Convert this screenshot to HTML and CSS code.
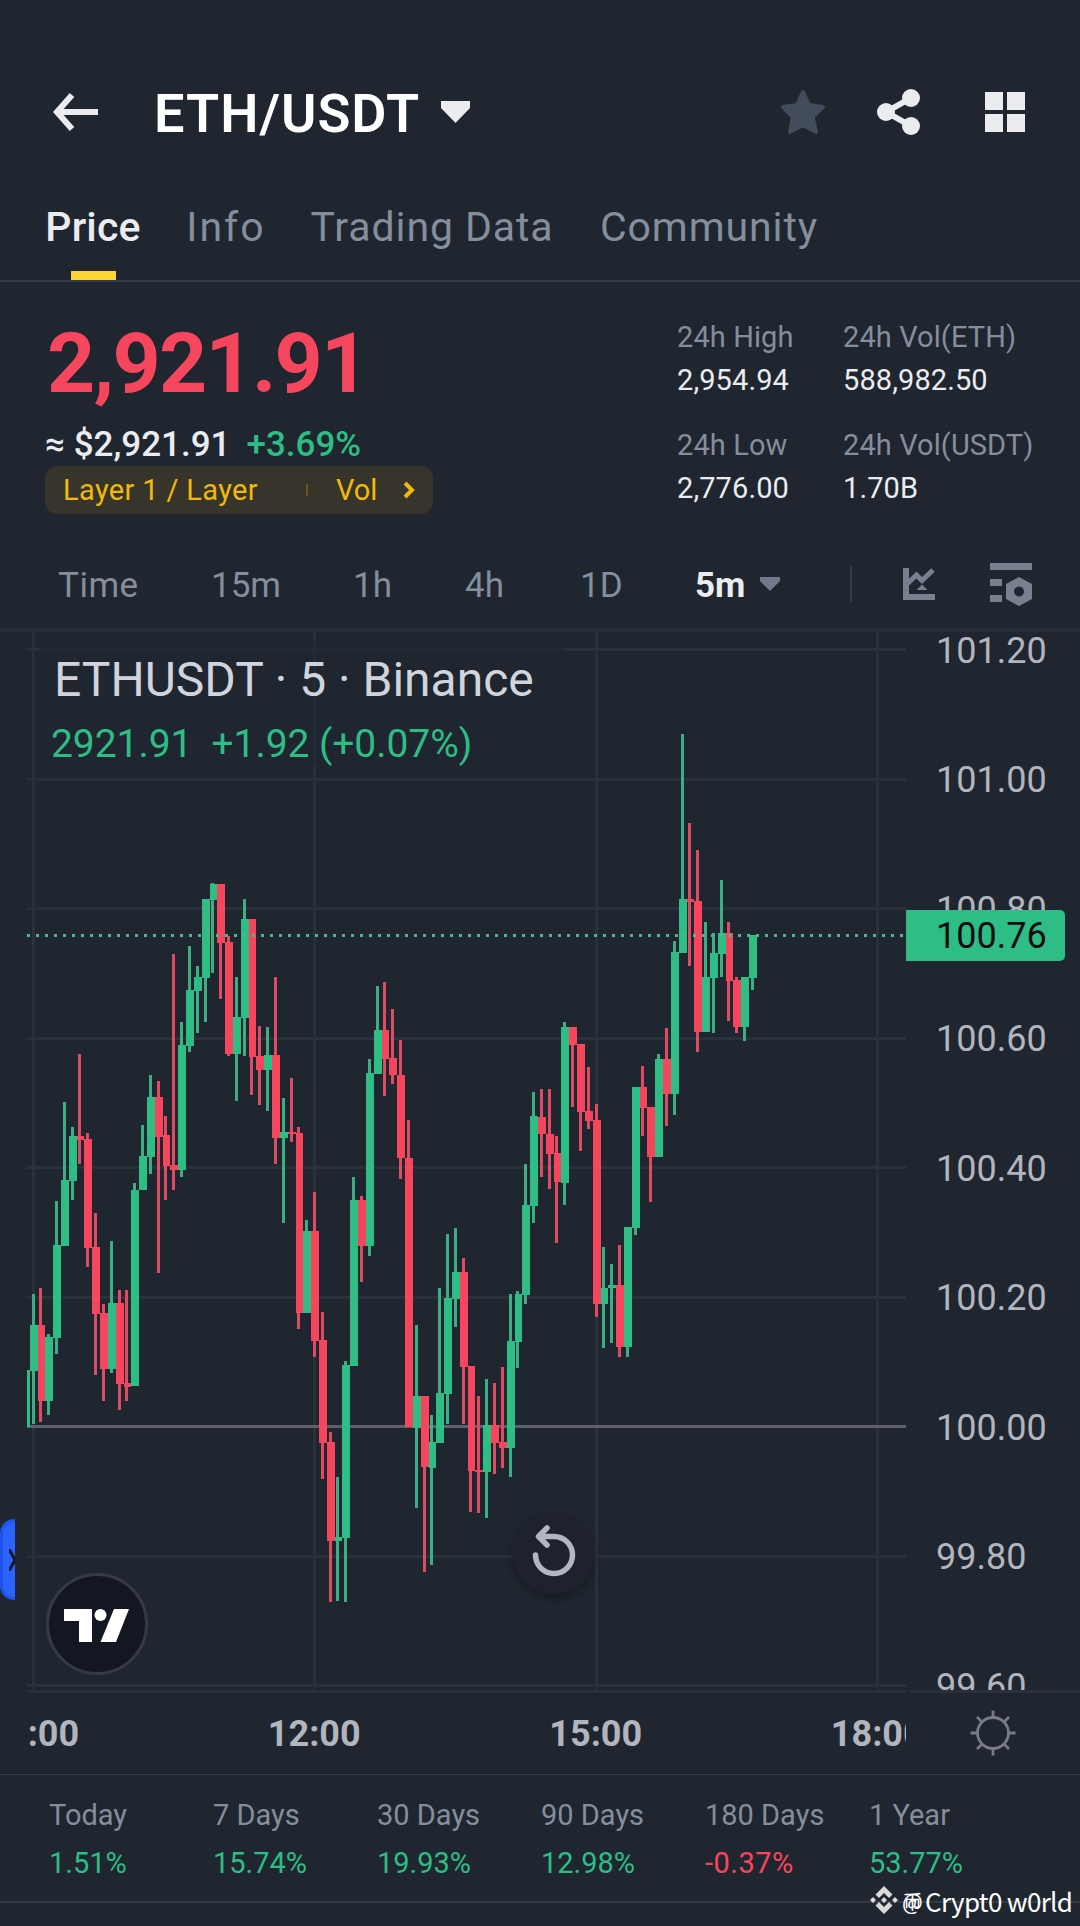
FILE: index.html
```html
<!DOCTYPE html>
<html lang="en">
  <head>
    <meta charset="UTF-8" />
    <meta name="viewport" content="width=device-width, initial-scale=1.0" />
    <title>ETH/USDT</title>
    <link rel="stylesheet" href="styles.css">
  </head>

  <body>
    <header class="topbar">
      <svg class="back" width="46" height="38" viewBox="0 0 46 38">
        <path d="M19 2 L4 19 L19 36 M4 19 H45" fill="none" stroke="#eaecef" stroke-width="6" />
      </svg>
      <h1>ETH/USDT</h1>
      <svg class="caret" width="29" height="22" viewBox="0 0 29 22">
        <path d="M0 0 H29 V7 L14.5 22 L0 7 Z" fill="#eaecef" />
      </svg>
      <div class="actions">
        <svg width="46" height="46" viewBox="0 0 46 46">
          <path d="M23 3 L29 16 L43 18 L32.500 28 L36 43 L23 36 L10 43 L13 28 L3 18 L17 16 Z" fill="#434c5a" stroke="#434c5a" stroke-width="4" stroke-linejoin="round" />
        </svg>
        <svg width="44" height="46" viewBox="0 0 44 46">
          <path d="M34 9 L9 23 L34 37" fill="none" stroke="#eaecef" stroke-width="6" />
          <g fill="#eaecef">
            <circle cx="34" cy="9" r="9" />
            <circle cx="9" cy="23" r="9" />
            <circle cx="34" cy="37" r="9" />
          </g>
        </svg>
        <svg width="40" height="40" viewBox="0 0 40 40">
          <path d="M0 0h18v18H0zM22 0h18v18H22zM0 22h18v18H0zM22 22h18v18H22z" fill="#eaecef" />
        </svg>
      </div>
    </header>

    <nav class="tabs">
      <a class="tab active">Price</a>
      <a class="tab info">Info</a>
      <a class="tab trading">Trading Data</a>
      <a class="tab community">Community</a>
    </nav>

    <section class="summary">
      <div class="quote">
        <div class="last-price">2,921.91</div>
        <div class="fiat"><span>≈ $2,921.91</span><span class="up">+3.69%</span></div>
        <div class="tag">
          <span class="tag-layer">Layer 1 / Layer</span>
          <i class="tag-sep"></i>
          <span>Vol</span>
          <svg width="12" height="18" viewBox="0 0 12 18">
            <path d="M2 2 L9 9 L2 16" fill="none" stroke="#f0b90b" stroke-width="4" />
          </svg>
        </div>
      </div>
      <div class="stats">
        <div class="stat"><span>24h High</span><b>2,954.94</b></div>
        <div class="stat"><span>24h Vol(ETH)</span><b>588,982.50</b></div>
        <div class="stat"><span>24h Low</span><b>2,776.00</b></div>
        <div class="stat"><span>24h Vol(USDT)</span><b>1.70B</b></div>
      </div>
    </section>

    <nav class="intervals">
      <span class="i-time">Time</span>
      <span class="i-15m">15m</span>
      <span class="i-1h">1h</span>
      <span class="i-4h">4h</span>
      <span class="i-1d">1D</span>
      <span class="i-5m">5m</span>
      <svg width="20" height="14" viewBox="0 0 20 14">
        <path d="M0 0 H20 V4 L10 14 L0 4 Z" fill="#707a8a" />
      </svg>
      <i class="divider"></i>
      <svg class="indicator" width="32" height="32" viewBox="0 0 32 32">
        <path d="M0 0H6V26H32V32H0Z" fill="#76808f" />
        <path d="M3 17 L13.500 7 L19 12.500 L30 2" fill="none" stroke="#76808f" stroke-width="5" />
        <path d="M19 16.500 L24.500 22 H13.500 Z" fill="#76808f" />
      </svg>
      <svg class="settings" width="42" height="43" viewBox="0 0 42 43">
        <path d="M0 0H42V7H0ZM0 16H12V23H0ZM0 32H12V39H0Z" fill="#76808f" />
        <path fill-rule="evenodd" d="M29 14 L42 21 V36 L29 43 L16 36 V21 Z M29 23.500 a5 5 0 1 0 .01 0 Z" fill="#76808f" />
      </svg>
    </nav>

    <section class="chart">
      <svg class="plot" id="plot" width="906" height="1058" viewBox="0 2 906 1058" shape-rendering="crispEdges"></svg>

      <div class="price-axis">
        <span>101.20</span>
        <span>101.00</span>
        <span>100.80</span>
        <span>100.60</span>
        <span>100.40</span>
        <span>100.20</span>
        <span>100.00</span>
        <span>99.80</span>
        <span>99.60</span>
      </div>
      <div class="price-tag">100.76</div>

      <div class="legend">
        <div class="symbol">ETHUSDT · 5 · Binance</div>
        <div class="change"><span>2921.91</span><span class="delta">+1.92 (+0.07%)</span></div>
      </div>

      <div class="drawer">
        <svg width="6" height="22" viewBox="0 0 6 22">
          <path d="M0 0 L6 11 L0 22" fill="none" stroke="#131722" stroke-width="3" />
        </svg>
      </div>

      <div class="tv-logo">
        <svg width="66" height="34" viewBox="0 0 66 34">
          <path d="M0 0H28V33H15V12H0ZM50 0H65L52 33H36.500Z" fill="#fff" />
          <circle cx="36.500" cy="6" r="6" fill="#fff" />
        </svg>
      </div>

      <div class="reset">
        <svg width="44" height="52" viewBox="0 0 44 52">
          <path d="M3.500 30 A18.500 18.500 0 1 0 22 11.500 H7 M15 3 L6.500 11.500 L15 20" fill="none" stroke="#b2b5c3" stroke-width="5.500" stroke-linecap="round" stroke-linejoin="round" />
        </svg>
      </div>
    </section>

    <section class="time-axis">
      <div class="times">
        <div class="times-track">
          <span>09:00</span>
          <span>12:00</span>
          <span>15:00</span>
          <span>18:00</span>
        </div>
      </div>
      <div class="gear">
        <svg width="46" height="46" viewBox="-23 -23 46 46">
          <g fill="none" stroke="#787b86" stroke-width="2.800">
            <circle r="15.500" />
            <path d="M0 -15V-22.500M0 15V22.500M-15 0H-22.500M15 0H22.500M-11 -11L-16 -16M11 -11L16 -16M-11 11L-16 16M11 11L16 16" />
          </g>
        </svg>
      </div>
    </section>

    <section class="performance">
      <div class="period"><span>Today</span><b>1.51%</b></div>
      <div class="period"><span>7 Days</span><b>15.74%</b></div>
      <div class="period"><span>30 Days</span><b>19.93%</b></div>
      <div class="period"><span>90 Days</span><b>12.98%</b></div>
      <div class="period"><span>180 Days</span><b class="down">-0.37%</b></div>
      <div class="period"><span>1 Year</span><b>53.77%</b></div>
    </section>

    <footer class="credit">
      <svg width="28" height="28" viewBox="0 0 28 28">
        <path d="M14 0 L22.500 8.500 L19 12 L14 7 L9 12 L5.500 8.500 ZM14 28 L22.500 19.500 L19 16 L14 21 L9 16 L5.500 19.500 ZM3 11 L6 14 L3 17 L0 14 ZM25 11 L28 14 L25 17 L22 14 ZM14 11 L17 14 L14 17 L11 14 Z" fill="#d9d9d9" />
      </svg>
      <span class="at">@<i>币</i></span>
      <span class="name">Crypt0 w0rld</span>
    </footer>

    <script src="script.js"></script>
  </body>
</html>
```

FILE: styles.css
```css
body {
  font-family: Roboto, "Liberation Sans", sans-serif;
  background-color: #1f262f;
  color: #eaecef;
  margin: 0;
  width: 1080px;
  height: 1926px;
  overflow: hidden;
  position: relative;
  white-space: nowrap;
}

svg {
  display: block;
  flex: none;
}

b {
  font-weight: 400;
}

.up {
  color: #2ebd85;
}

/* Header */
.topbar {
  display: flex;
  align-items: center;
  height: 153px;
  padding: 71px 55px 0 53px;
  box-sizing: border-box;
}

.topbar h1 {
  width: 287px;
  margin: 4px 0 0 55px;
  font-size: 54px;
  line-height: 60px;
  font-weight: 600;
  letter-spacing: 1px;
  color: #fff;
}

.actions {
  display: flex;
  align-items: center;
  gap: 51px;
  margin-left: auto;
}

.actions svg:last-child {
  margin-left: 13px;
}

/* Tabs */
.tabs {
  display: flex;
  height: 127px;
  padding-left: 46px;
  border-bottom: 2px solid #333b47;
}

.tab {
  display: flex;
  flex-direction: column;
  justify-content: space-between;
  align-items: center;
  padding-top: 49px;
  font-size: 41px;
  line-height: 50px;
  letter-spacing: 0.9px;
  color: #848e9c;
}

.tab.active {
  width: 94px;
  font-weight: 500;
  letter-spacing: 0.2px;
  color: #eaecef;
}

.tab.active::after {
  content: "";
  width: 45px;
  height: 9px;
  background-color: #fcd535;
}

.info {
  width: 78px;
  margin-left: 47px;
  letter-spacing: 2px;
}

.trading {
  width: 244px;
  margin-left: 45px;
}

.community {
  width: 220px;
  margin-left: 45px;
}

/* Price summary */
.summary {
  display: flex;
  height: 258px;
}

.quote {
  width: 677px;
  padding: 32px 0 0 45px;
  box-sizing: border-box;
}

.last-price {
  margin-left: 2px;
  font-size: 84px;
  line-height: 100px;
  font-weight: 700;
  letter-spacing: -1.7px;
  color: #f6465d;
}

.fiat {
  display: flex;
  gap: 16px;
  margin-top: 9px;
  font-size: 35px;
  line-height: 43px;
  font-weight: 500;
}

.tag {
  display: flex;
  align-items: center;
  width: 388px;
  height: 48px;
  padding-left: 18px;
  box-sizing: border-box;
  border-radius: 12px;
  background-color: #37342c;
  color: #f0b90b;
  font-size: 29px;
}

.tag-layer {
  width: 243px;
  letter-spacing: 0.35px;
}

.tag-sep {
  width: 2px;
  height: 12px;
  margin-right: 28px;
  background-color: #6c5720;
}

.tag svg {
  margin-left: 26px;
}

.stats {
  display: grid;
  grid-template-columns: 166px 230px;
  grid-template-rows: 108px 108px;
  padding-top: 34px;
}

.stat {
  display: flex;
  flex-direction: column;
  font-size: 29px;
  line-height: 43px;
  letter-spacing: 0.1px;
}

.stat span {
  color: #848e9c;
}

/* Intervals */
.intervals {
  display: flex;
  align-items: center;
  height: 88px;
  padding-left: 58px;
  border-bottom: 4px solid #262d37;
  font-size: 35px;
  color: #848e9c;
}

.intervals span {
  padding-top: 3px;
}

.i-time {
  width: 153px;
  letter-spacing: 0.5px;
}

.i-15m {
  width: 142px;
}

.i-1h {
  width: 112px;
}

.i-4h {
  width: 115px;
}

.i-1d {
  width: 115px;
}

.i-5m {
  width: 65px;
  font-weight: 700;
  color: #eaecef;
}

.divider {
  width: 2px;
  height: 36px;
  margin: 0 51px 0 70px;
  background-color: #333b47;
}

.settings {
  margin-left: 55px;
}

/* Chart */
.chart {
  display: flex;
  position: relative;
  height: 1058px;
}

.price-axis {
  display: flex;
  flex-direction: column;
  width: 174px;
  height: 1058px;
  overflow: hidden;
  font-size: 36px;
  color: #b2b5be;
}

.price-axis span {
  flex: none;
  height: 129.5px;
  padding-left: 30px;
  line-height: 129.5px;
}

.price-axis span:first-child {
  margin-top: -45.5px;
}

.price-tag {
  position: absolute;
  left: 906px;
  top: 278px;
  width: 159px;
  height: 51px;
  padding-left: 30px;
  box-sizing: border-box;
  border-radius: 0 5px 5px 0;
  background-color: #2ebd85;
  color: #0b0e11;
  font-size: 36px;
  line-height: 53px;
}

.legend {
  position: absolute;
  left: 39px;
  top: 8px;
  width: 526px;
  height: 126px;
  padding: 10px 0 0 13px;
  box-sizing: border-box;
  background-color: rgba(31, 38, 47, 0.5);
}

.symbol {
  margin-left: 2px;
  font-size: 48px;
  line-height: 60px;
  color: #d1d4dc;
}

.change {
  display: flex;
  gap: 19px;
  margin: 9px 0 0 -1px;
  font-size: 39px;
  line-height: 50px;
  letter-spacing: -0.05px;
  color: #2ebd85;
}

.drawer {
  position: absolute;
  left: 0;
  top: 887px;
  width: 15px;
  height: 81px;
  border: solid #1e53e5;
  border-width: 3px 0 3px 3px;
  border-radius: 14px 0 0 14px;
  background-color: #2962ff;
  box-sizing: border-box;
  display: flex;
  align-items: center;
  justify-content: flex-end;
}

.tv-logo {
  position: absolute;
  left: 46px;
  top: 941px;
  width: 102px;
  height: 102px;
  padding-top: 3px;
  border: 3px solid #363a45;
  border-radius: 50%;
  background-color: #131722;
  box-sizing: border-box;
  display: flex;
  align-items: center;
  justify-content: center;
}

.reset {
  position: absolute;
  left: 513px;
  top: 880px;
  width: 82px;
  height: 82px;
  padding-bottom: 4px;
  border-radius: 50%;
  background-color: #1e222d;
  box-shadow: 0 4px 8px rgba(0, 0, 0, 0.3);
  box-sizing: border-box;
  display: flex;
  align-items: center;
  justify-content: center;
}

/* Time axis */
.time-axis {
  display: flex;
  height: 84px;
  border-bottom: 1px solid #333b47;
}

.times {
  width: 879px;
  margin-left: 27px;
  overflow: hidden;
  border-top: 3px solid #2a2f39;
}

.times-track {
  display: flex;
  margin-left: -135px;
}

.times-track span {
  flex: none;
  width: 281.5px;
  line-height: 83px;
  font-size: 36px;
  font-weight: 700;
  text-align: center;
  color: #b2b5be;
}

.gear {
  flex: 1;
  display: flex;
  align-items: center;
  margin-left: 3px;
  padding: 0 0 2px 61px;
  border-top: 3px solid #2a2f39;
}

/* Performance */
.performance {
  display: grid;
  grid-template-columns: repeat(6, 164px);
  height: 128px;
  padding: 16px 0 0 49px;
  box-sizing: border-box;
  border-bottom: 2px solid #333b47;
}

.period {
  display: flex;
  flex-direction: column;
  font-size: 29px;
  line-height: 48px;
}

.period span {
  color: #848e9c;
}

.period b {
  color: #2ebd85;
}

.period .down {
  color: #f6465d;
  letter-spacing: 0.5px;
}

.credit {
  position: absolute;
  left: 870px;
  top: 1880px;
  height: 40px;
  display: flex;
  align-items: center;
  font-family: "Noto Sans CJK SC", "Noto Sans", sans-serif;
  font-size: 26px;
  color: #fff;
}

.at {
  position: relative;
  width: 23px;
  margin-left: 4px;
  font-size: 22px;
}

.at i {
  position: absolute;
  left: 1px;
  top: 3px;
  font-size: 19px;
  font-style: normal;
}

.name {
  letter-spacing: -0.7px;
}
```

FILE: script.js
```
// [up, high, body top, body bottom, low] for every 5 minute bar
const bars = [
  [1, 740, 740, 797, 797],
  [1, 664, 695, 741, 794],
  [0, 658, 695, 771, 792],
  [1, 704, 707, 771, 785],
  [1, 571, 615, 708, 724],
  [1, 472, 550, 616, 616],
  [1, 497, 506, 551, 570],
  [0, 424, 506, 510, 534],
  [0, 503, 509, 618, 637],
  [0, 583, 617, 684, 745],
  [0, 674, 683, 739, 771],
  [1, 611, 673, 739, 743],
  [0, 660, 673, 754, 780],
  [0, 660, 753, 757, 771],
  [1, 553, 560, 756, 756],
  [1, 495, 526, 560, 560],
  [1, 445, 467, 527, 544],
  [0, 451, 467, 507, 643],
  [0, 486, 505, 536, 570],
  [0, 324, 535, 540, 560],
  [1, 392, 415, 540, 547],
  [1, 316, 360, 416, 422],
  [1, 336, 347, 361, 403],
  [1, 269, 269, 348, 392],
  [1, 253, 254, 270, 343],
  [0, 254, 254, 313, 369],
  [0, 306, 312, 424, 426],
  [1, 347, 387, 424, 471],
  [1, 269, 289, 388, 426],
  [0, 289, 289, 427, 465],
  [0, 396, 426, 440, 475],
  [1, 397, 425, 440, 481],
  [0, 347, 425, 508, 534],
  [1, 468, 502, 508, 593],
  [0, 448, 502, 504, 512],
  [0, 497, 503, 683, 699],
  [1, 590, 601, 683, 683],
  [0, 562, 601, 711, 727],
  [0, 682, 710, 813, 849],
  [0, 802, 812, 911, 972],
  [1, 847, 907, 911, 971],
  [1, 731, 735, 908, 972],
  [1, 547, 570, 736, 736],
  [0, 566, 570, 616, 652],
  [1, 429, 443, 616, 626],
  [1, 356, 400, 444, 444],
  [0, 352, 400, 429, 466],
  [0, 379, 428, 445, 454],
  [0, 410, 445, 528, 549],
  [0, 490, 528, 797, 797],
  [1, 695, 766, 798, 878],
  [0, 766, 766, 837, 942],
  [1, 785, 812, 838, 935],
  [1, 658, 763, 813, 813],
  [1, 604, 668, 764, 794],
  [1, 598, 642, 669, 697],
  [0, 628, 642, 737, 794],
  [0, 736, 736, 841, 882],
  [0, 766, 840, 842, 883],
  [1, 749, 795, 842, 888],
  [0, 753, 795, 813, 844],
  [0, 737, 812, 818, 838],
  [1, 664, 711, 818, 847],
  [1, 661, 664, 712, 738],
  [1, 534, 575, 665, 674],
  [1, 462, 486, 576, 593],
  [0, 459, 487, 504, 547],
  [0, 459, 504, 524, 559],
  [0, 506, 523, 552, 613],
  [1, 392, 397, 553, 575],
  [0, 397, 397, 415, 477],
  [0, 414, 414, 482, 521],
  [0, 437, 481, 491, 499],
  [0, 474, 490, 674, 687],
  [1, 617, 658, 674, 718],
  [1, 634, 655, 658, 713],
  [0, 615, 655, 717, 727],
  [1, 597, 597, 717, 727],
  [1, 457, 457, 598, 605],
  [0, 436, 457, 478, 506],
  [0, 477, 477, 527, 572],
  [1, 424, 429, 527, 527],
  [0, 398, 429, 464, 496],
  [1, 311, 322, 464, 485],
  [1, 104, 269, 323, 323],
  [0, 193, 269, 272, 336],
  [0, 220, 271, 402, 422],
  [1, 292, 347, 402, 402],
  [1, 303, 323, 348, 403],
  [1, 250, 303, 324, 347],
  [0, 292, 303, 351, 391],
  [0, 347, 350, 397, 403],
  [1, 347, 347, 397, 411],
  [1, 305, 305, 348, 360],
];

const PLOT_LEFT = 27;
const STEP = 7.82;
const plot = document.getElementById("plot");
let shapes = "";

function rect(x, y, width, height, color) {
  if (x < PLOT_LEFT) {
    width -= PLOT_LEFT - x;
    x = PLOT_LEFT;
  }
  shapes += `<rect x="${x}" y="${y}" width="${width}" height="${height}" fill="${color}" />`;
}

// grid
for (const x of [32, 313, 595, 876]) rect(x, 2, 3, 1058, "#2b313b");
for (let i = 0; i < 9; i++) {
  rect(PLOT_LEFT, Math.round(18 + i * 129.5), 879, 3, i === 6 ? "#5d606b" : "#2b313b");
}

// candles
let edge = PLOT_LEFT;
bars.forEach(([up, high, top, bottom, low], i) => {
  const x = 32 + Math.floor((i - 1) * STEP);
  const left = Math.max(x - 2, edge);
  rect(i === 0 ? PLOT_LEFT : x, high, 3, low - high, up ? "#3dae83" : "#dc4c62");
  rect(left, top, x + 6 - left, bottom - top, up ? "#2ebd85" : "#f6465d");
  edge = x + 6;
});

// last price
for (let x = PLOT_LEFT; x < 906; x += 9) rect(x, 304, 3, 3, "#4fb690");

plot.innerHTML = shapes;
```
